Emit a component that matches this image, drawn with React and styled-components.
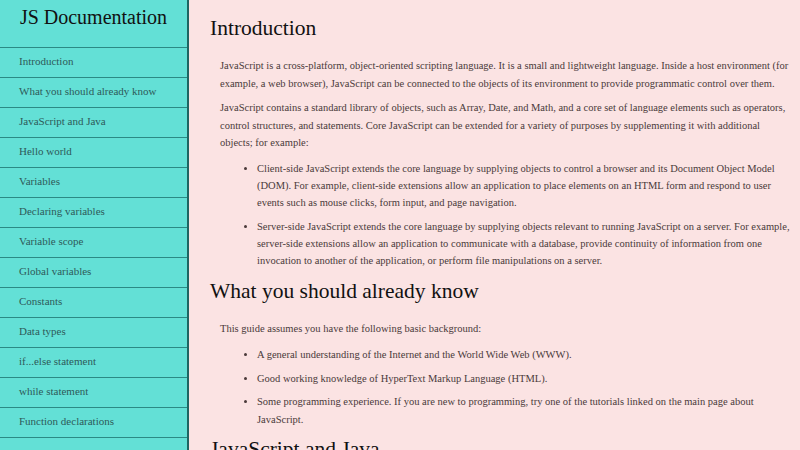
import React from 'react';
import styled, { createGlobalStyle } from 'styled-components';

const GlobalStyle = createGlobalStyle`
  html, body {
    margin: 0;
    padding: 0;
    height: 100%;
    overflow: hidden;
  }
  body {
    font-family: "Liberation Serif", "DejaVu Serif", serif;
    background: #fbe3e3;
  }
`;

const Page = styled.div`
  display: flex;
  height: 100vh;
  overflow: hidden;
`;

const Sidebar = styled.nav`
  flex: 0 0 187px;
  background: #63e0d6;
  border-right: 2px solid #1f6562;
  display: flex;
  flex-direction: column;
  overflow: hidden;
`;

const SideTitle = styled.header`
  flex: 0 0 48px;
  box-sizing: border-box;
  padding-top: 4px;
  text-align: center;
  font-size: 20px;
  line-height: 26px;
  color: #111;
  border-bottom: 1px solid #2b8a85;
`;

const NavLink = styled.a`
  flex: 0 0 30px;
  box-sizing: border-box;
  padding: 6px 0 0 19px;
  font-size: 11px;
  line-height: 14px;
  color: #2e5a59;
  text-decoration: none;
  border-bottom: 1px solid #2b8a85;
`;

const Main = styled.main`
  flex: 1;
  padding: 13px 10px 0 21px;
  overflow: hidden;
  color: #4a3a3a;
`;

const Section = styled.section`
  margin-bottom: 2px;
`;

const Heading = styled.h2`
  margin: 0 0 14px;
  font-size: 21.5px;
  font-weight: normal;
  color: #111;
  line-height: 30px;
`;

const Para = styled.p`
  margin: 0 0 7px 10px;
  font-size: 10.5px;
  line-height: 17.5px;
`;

const List = styled.ul`
  margin: 8px 0 0 10px;
  padding-left: 37px;
  font-size: 10.5px;
  line-height: 17.3px;
`;

const Item = styled.li`
  margin-bottom: 6.5px;
`;

const navItems = [
  'Introduction',
  'What you should already know',
  'JavaScript and Java',
  'Hello world',
  'Variables',
  'Declaring variables',
  'Variable scope',
  'Global variables',
  'Constants',
  'Data types',
  'if...else statement',
  'while statement',
  'Function declarations',
];

export default function App() {
  return (
    <>
      <GlobalStyle />
      <Page>
        <Sidebar>
          <SideTitle>JS Documentation</SideTitle>
          {navItems.map((n) => (
            <NavLink key={n} href={'#' + n.replace(/\s/g, '_')}>{n}</NavLink>
          ))}
        </Sidebar>
        <Main>
          <Section>
            <Heading>Introduction</Heading>
            <Para>
              JavaScript is a cross-platform, object-oriented scripting language. It is a small and lightweight language. Inside a host environment (for example, a web browser), JavaScript can be connected to the objects of its environment to provide programmatic control over them.
            </Para>
            <Para>
              JavaScript contains a standard library of objects, such as Array, Date, and Math, and a core set of language elements such as operators, control structures, and statements. Core JavaScript can be extended for a variety of purposes by supplementing it with additional objects; for example:
            </Para>
            <List>
              <Item>
                Client-side JavaScript extends the core language by supplying objects to control a browser and its Document Object Model (DOM). For example, client-side extensions allow an application to place elements on an HTML form and respond to user events such as mouse clicks, form input, and page navigation.
              </Item>
              <Item>
                Server-side JavaScript extends the core language by supplying objects relevant to running JavaScript on a server. For example, server-side extensions allow an application to communicate with a database, provide continuity of information from one invocation to another of the application, or perform file manipulations on a server.
              </Item>
            </List>
          </Section>
          <Section>
            <Heading>What you should already know</Heading>
            <Para>This guide assumes you have the following basic background:</Para>
            <List>
              <Item>A general understanding of the Internet and the World Wide Web (WWW).</Item>
              <Item>Good working knowledge of HyperText Markup Language (HTML).</Item>
              <Item>Some programming experience. If you are new to programming, try one of the tutorials linked on the main page about JavaScript.</Item>
            </List>
          </Section>
          <Section>
            <Heading>JavaScript and Java</Heading>
          </Section>
        </Main>
      </Page>
    </>
  );
}
